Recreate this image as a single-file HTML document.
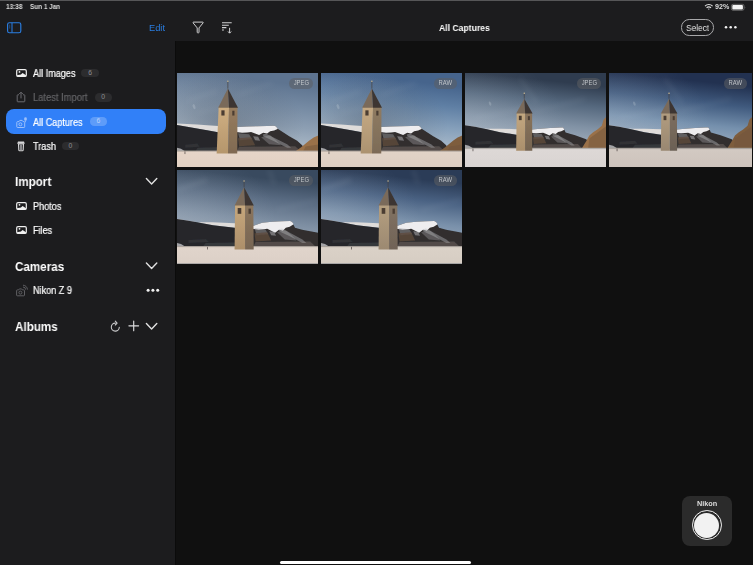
<!DOCTYPE html>
<html><head><meta charset="utf-8">
<style>
*{margin:0;padding:0;box-sizing:border-box}
html,body{width:753px;height:565px;overflow:hidden;background:#101010;font-family:"Liberation Sans",sans-serif;color:#fff}
.abs{position:absolute}
svg.abs{overflow:visible}
#side{position:absolute;left:0;top:0;width:175px;height:565px;background:#1c1c1e}
#tool{position:absolute;left:175px;top:0;width:578px;height:41.4px;background:#1c1c1e}
#sep{position:absolute;left:175px;top:41px;width:1px;height:524px;background:#0b0b0b}
#topline{position:absolute;left:0;top:0;width:753px;height:1px;background:#565658}
.t{position:absolute;white-space:nowrap;line-height:1;transform-origin:0 0;will-change:transform}
.badge{position:absolute;height:8.6px;border-radius:4.3px;background:#2c2c2e;color:#8e8e93;font-size:6.8px;text-align:center;line-height:8.8px}
.hdr{font-weight:bold;font-size:12.4px;transform:scaleX(.94)}
.item{font-size:10px;transform:scaleX(.91);-webkit-text-stroke:0.2px currentColor}
.thumb{position:absolute;overflow:hidden}
.thumb svg{display:block;width:100%;height:100%}
.tag{position:absolute;top:5px;right:5px;height:10.7px;border-radius:5.35px;background:rgba(92,94,98,.55);color:rgba(205,208,212,.9);font-size:6.4px;line-height:10.7px;text-align:center;will-change:transform}.tag span{display:inline-block;transform:scaleX(.92)}
</style></head><body>
<div id="side"></div>
<div id="tool"></div>
<div id="sep"></div>
<div id="topline"></div>

<!-- status bar -->
<div class="t" style="left:5.8px;top:3.3px;font-size:7px;color:#ddd;font-weight:bold;transform:scaleX(.92)">13:38</div><div class="t" style="left:29.8px;top:3.3px;font-size:7px;color:#ddd;font-weight:bold;transform:scaleX(.91)">Sun 1 Jan</div>
<svg class="abs" style="left:704px;top:3px" width="10" height="8" viewBox="0 0 10 8">
 <path d="M1,3.2 A5.2,5.2 0 0 1 8.6,3.2" fill="none" stroke="#ddd" stroke-width="1.1"/>
 <path d="M2.6,4.8 A3,3 0 0 1 7,4.8" fill="none" stroke="#ddd" stroke-width="1.1"/>
 <path d="M4.8,6.8 L3.9,5.9 A1.3,1.3 0 0 1 5.7,5.9 Z" fill="#ddd"/>
</svg>
<div class="t" style="left:714.8px;top:4.1px;font-size:7.1px;color:#ddd;font-weight:bold;transform:scaleX(1)">92%</div>
<svg class="abs" style="left:730px;top:3px" width="18" height="9" viewBox="0 0 18 9">
 <rect x="1.4" y="1.3" width="12.6" height="6" rx="1.6" fill="none" stroke="#777" stroke-width="0.8"/>
 <rect x="2.3" y="2.1" width="10.6" height="4.4" rx="0.8" fill="#f4f4f4"/>
 <path d="M14.8,3.4 Q16,4.3 14.8,5.2 Z" fill="#777"/>
</svg>

<!-- sidebar toggle -->
<svg class="abs" style="left:6px;top:21px" width="17" height="14" viewBox="0 0 17 14">
 <rect x="1.6" y="1.7" width="13.2" height="10" rx="1.8" fill="none" stroke="#2a7de0" stroke-width="1.15"/>
 <line x1="6" y1="1.7" x2="6" y2="11.7" stroke="#2a7de0" stroke-width="1.05"/>
 <line x1="3.7" y1="3.6" x2="3.7" y2="7.6" stroke="#2a7de0" stroke-width="0.8" opacity=".6"/>
</svg>
<div class="t" style="left:149.2px;top:24px;font-size:9.3px;color:#2a7de0">Edit</div>

<!-- sidebar items -->
<div class="abs" style="left:6px;top:109.2px;width:159.8px;height:24.8px;border-radius:8px;background:#3180f8"></div>

<svg class="abs" style="left:15px;top:68px" width="13" height="10" viewBox="0 0 13 10">
 <rect x="1.7" y="1.7" width="9.6" height="6.7" rx="1.3" fill="none" stroke="#f0f0f0" stroke-width="1.2"/>
 <circle cx="4.5" cy="3.9" r="0.9" fill="#f0f0f0"/>
 <path d="M1.8,8.4 L1.8,7.6 Q3.5,6.4 5,6.8 Q6,7 7.5,5 Q9,5.5 11.2,7.6 L11.2,8.4 Z" fill="#f0f0f0"/>
</svg>
<div class="t item" style="left:32.7px;top:68.7px">All Images</div>
<div class="badge" style="left:81.3px;top:68.7px;width:17.5px">6</div>

<svg class="abs" style="left:15px;top:90px" width="12" height="13" viewBox="0 0 12 13">
 <path d="M4,4.8 L2.8,4.8 Q2.2,4.8 2.2,5.4 L2.2,11.2 Q2.2,11.8 2.8,11.8 L9.2,11.8 Q9.8,11.8 9.8,11.2 L9.8,5.4 Q9.8,4.8 9.2,4.8 L8,4.8" fill="none" stroke="#6b6b70" stroke-width="1"/>
 <path d="M6,8.4 L6,2.4 M4.2,4 L6,2.2 L7.8,4" fill="none" stroke="#6b6b70" stroke-width="1"/>
</svg>
<div class="t item" style="left:32.7px;top:93.3px;color:#636366;transform:scaleX(.935)">Latest Import</div>
<div class="badge" style="left:94.5px;top:93.2px;width:17.5px">0</div>

<svg class="abs" style="left:15px;top:116px" width="13" height="13" viewBox="0 0 13 13">
 <path d="M1.8,6.4 Q1.8,5.6 2.6,5.6 L4,5.6 L4.8,4.4 L7.2,4.4 L8,5.6 L8.9,5.6 Q9.7,5.6 9.7,6.4 L9.7,10.8 Q9.7,11.5 8.9,11.5 L2.6,11.5 Q1.8,11.5 1.8,10.8 Z" fill="none" stroke="#9cc0fa" stroke-width="1"/>
 <circle cx="5.4" cy="8.3" r="1.5" fill="none" stroke="#9cc0fa" stroke-width="1"/>
 <rect x="9.2" y="1.2" width="2.6" height="3.6" rx="1.3" fill="#9cc0fa"/>
 <line x1="10.5" y1="4.6" x2="10.5" y2="6.2" stroke="#9cc0fa" stroke-width="0.8"/>
</svg>
<div class="t item" style="left:32.7px;top:117.5px">All Captures</div>
<div class="badge" style="left:89.6px;top:117.4px;width:17.5px;background:rgba(255,255,255,.22);color:rgba(255,255,255,.55)">6</div>

<svg class="abs" style="left:15px;top:140px" width="12" height="12" viewBox="0 0 12 12">
 <path d="M3,1.6 L9,1.6 L9.8,3.8 L2.2,3.8 Z" fill="#d6d6d8"/>
 <path d="M3.5,4 L8.5,4 L8.2,10 Q8.1,10.7 7.4,10.7 L4.6,10.7 Q3.9,10.7 3.8,10 Z" fill="none" stroke="#d6d6d8" stroke-width="1.1"/>
 <rect x="4.8" y="4.6" width="2.4" height="5.4" fill="#8a8a8e"/>
</svg>
<div class="t item" style="left:32.7px;top:142.1px">Trash</div>
<div class="badge" style="left:61.7px;top:141.8px;width:17.5px">0</div>

<div class="t hdr" style="left:14.8px;top:176.3px">Import</div>
<svg class="abs" style="left:144px;top:176px" width="16" height="11" viewBox="0 0 16 11">
 <path d="M2.4,2.6 L7.6,8 L12.8,2.6" fill="none" stroke="#e0e0e0" stroke-width="1.4" stroke-linecap="round" stroke-linejoin="round"/>
</svg>

<svg class="abs" style="left:15px;top:201px" width="13" height="10" viewBox="0 0 13 10">
 <rect x="1.7" y="1.6" width="9.6" height="6.8" rx="1.3" fill="none" stroke="#f0f0f0" stroke-width="1.2"/>
 <circle cx="4.5" cy="3.8" r="0.9" fill="#f0f0f0"/>
 <path d="M1.8,8.4 L1.8,7.6 Q3.5,6.4 5,6.8 Q6,7 7.5,5 Q9,5.5 11.2,7.6 L11.2,8.4 Z" fill="#f0f0f0"/>
</svg>
<div class="t item" style="left:32.7px;top:202.1px">Photos</div>
<svg class="abs" style="left:15px;top:225px" width="13" height="10" viewBox="0 0 13 10">
 <rect x="1.7" y="1.6" width="9.6" height="6.8" rx="1.3" fill="none" stroke="#f0f0f0" stroke-width="1.2"/>
 <circle cx="4.5" cy="3.8" r="0.9" fill="#f0f0f0"/>
 <path d="M1.8,8.4 L1.8,7.6 Q3.5,6.4 5,6.8 Q6,7 7.5,5 Q9,5.5 11.2,7.6 L11.2,8.4 Z" fill="#f0f0f0"/>
</svg>
<div class="t item" style="left:32.7px;top:226.3px">Files</div>

<div class="t hdr" style="left:14.8px;top:260.7px">Cameras</div>
<svg class="abs" style="left:144px;top:260px" width="16" height="11" viewBox="0 0 16 11">
 <path d="M2.4,3 L7.6,8.4 L12.8,3" fill="none" stroke="#e0e0e0" stroke-width="1.4" stroke-linecap="round" stroke-linejoin="round"/>
</svg>
<svg class="abs" style="left:15px;top:283px" width="14" height="14" viewBox="0 0 14 14">
 <path d="M1.6,7.6 Q1.6,6.9 2.3,6.9 L3.6,6.9 L4.4,5.9 L6.6,5.9 L7.4,6.9 L8.8,6.9 Q9.5,6.9 9.5,7.6 L9.5,12.1 Q9.5,12.8 8.8,12.8 L2.3,12.8 Q1.6,12.8 1.6,12.1 Z" fill="none" stroke="#5e5e62" stroke-width="1"/>
 <circle cx="5.4" cy="9.6" r="1.5" fill="none" stroke="#5e5e62" stroke-width="1"/>
 <path d="M8,2.2 A4.4,4.4 0 0 1 12.4,6.6" fill="none" stroke="#5e5e62" stroke-width="1"/>
 <path d="M8,4 A2.6,2.6 0 0 1 10.6,6.6" fill="none" stroke="#5e5e62" stroke-width="1"/>
</svg>
<div class="t item" style="left:32.7px;top:286.3px">Nikon Z 9</div>
<svg class="abs" style="left:145px;top:287px" width="16" height="7" viewBox="0 0 16 7">
 <circle cx="3.1" cy="3.3" r="1.5" fill="#f2f2f2"/>
 <circle cx="7.9" cy="3.3" r="1.5" fill="#f2f2f2"/>
 <circle cx="12.7" cy="3.3" r="1.5" fill="#f2f2f2"/>
</svg>

<div class="t hdr" style="left:14.8px;top:320.7px">Albums</div>
<svg class="abs" style="left:109px;top:319px" width="14" height="14" viewBox="0 0 14 14">
 <path d="M10.3,8.3 A4,4 0 1 1 6.4,4.1" fill="none" stroke="#c8c8ca" stroke-width="1.1" stroke-linecap="round"/>
 <path d="M6.3,2.2 L8.1,4.1 L6.3,6" fill="none" stroke="#c8c8ca" stroke-width="1.1" stroke-linecap="round" stroke-linejoin="round"/>
</svg>
<svg class="abs" style="left:127px;top:319px" width="14" height="14" viewBox="0 0 14 14">
 <path d="M6.7,2 L6.7,11.7 M1.9,6.8 L11.6,6.8" fill="none" stroke="#dcdcde" stroke-width="1.15" stroke-linecap="round"/>
</svg>
<svg class="abs" style="left:144px;top:321px" width="16" height="11" viewBox="0 0 16 11">
 <path d="M2.4,2.6 L7.6,8 L12.8,2.6" fill="none" stroke="#e0e0e0" stroke-width="1.4" stroke-linecap="round" stroke-linejoin="round"/>
</svg>

<!-- toolbar -->
<svg class="abs" style="left:190px;top:19px" width="16" height="16" viewBox="0 0 16 16">
 <path d="M3.6,3.1 L12.6,3.1 Q13.6,3.1 13,4 L9,8.9 L9,13.2 Q9,13.9 8.3,13.9 L7.9,13.9 Q7.2,13.9 7.2,13.2 L7.2,8.9 L3.2,4 Q2.6,3.1 3.6,3.1 Z" fill="none" stroke="#cfcfd1" stroke-width="1" stroke-linejoin="round"/>
</svg>
<svg class="abs" style="left:220px;top:20px" width="15" height="16" viewBox="0 0 15 16">
 <path d="M2,2.7 L11.7,2.7 M2,5.3 L8.8,5.3 M2,7.6 L6.4,7.6 M2,10 L3.9,10" fill="none" stroke="#d0d0d2" stroke-width="1.1"/>
 <path d="M9.6,7.8 L9.6,13 M8,11.5 L9.6,13.2 L11.2,11.5" fill="none" stroke="#d0d0d2" stroke-width="1" stroke-linejoin="round"/>
</svg>
<div class="t" style="left:439px;top:22.6px;font-size:9.4px;font-weight:bold;transform:scaleX(.92)">All Captures</div>
<div class="abs" style="left:681px;top:19.3px;width:33.2px;height:16.5px;border:1px solid #a8a8aa;border-radius:8.25px"></div>
<div class="t" style="left:686px;top:23.6px;font-size:9.2px;color:#e8e8e8;transform:scaleX(.9)">Select</div>
<svg class="abs" style="left:723px;top:24px" width="16" height="7" viewBox="0 0 16 7">
 <circle cx="3" cy="3.3" r="1.25" fill="#f2f2f2"/>
 <circle cx="7.7" cy="3.3" r="1.25" fill="#f2f2f2"/>
 <circle cx="12.4" cy="3.3" r="1.25" fill="#f2f2f2"/>
</svg>

<!-- thumbs -->
<div class="thumb" style="left:177px;top:73px;width:141.2px;height:94.3px"><svg viewBox="0 0 141 94" preserveAspectRatio="none"><defs><filter id="b0" x="-5%" y="-5%" width="110%" height="110%"><feGaussianBlur stdDeviation="0.55"/></filter><filter id="bb0" x="-20%" y="-20%" width="140%" height="140%"><feGaussianBlur stdDeviation="2.6"/></filter><filter id="bt0" x="-20%" y="-20%" width="140%" height="140%"><feGaussianBlur stdDeviation="0.6"/></filter><linearGradient id="s0" x1="0.1" y1="0" x2="0" y2="0.62"><stop offset="0" stop-color="#5e7490"/><stop offset="0.35" stop-color="#7489a2"/><stop offset="0.72" stop-color="#8d9fb3"/><stop offset="1" stop-color="#a5b4c3"/></linearGradient><radialGradient id="sh0" cx="0" cy="0.5" r="0.7"><stop offset="0" stop-color="#c0cad4" stop-opacity="0.22"/><stop offset="1" stop-color="#c0cad4" stop-opacity="0"/></radialGradient><linearGradient id="l0" x1="0" y1="0" x2="0" y2="1"><stop offset="0" stop-color="#c2b5ab"/><stop offset="0.1" stop-color="#e6d5c8"/><stop offset="1" stop-color="#e3d1c3"/></linearGradient><linearGradient id="tl0" x1="0" y1="0" x2="0" y2="1"><stop offset="0" stop-color="#d0af82"/><stop offset="1" stop-color="#b5966c"/></linearGradient><linearGradient id="tr0" x1="0" y1="0" x2="0" y2="1"><stop offset="0" stop-color="#977c5e"/><stop offset="1" stop-color="#806a52"/></linearGradient><radialGradient id="dk0" cx="0.35" cy="0.55" r="0.55"><stop offset="0" stop-color="#556170" stop-opacity="0.5"/><stop offset="1" stop-color="#5a6470" stop-opacity="0"/></radialGradient></defs><rect width="141" height="94" fill="url(#s0)"/><rect width="141" height="94" fill="url(#sh0)"/><rect width="141" height="94" fill="url(#dk0)"/><g filter="url(#bb0)" opacity="0.12"><line x1="10.0" y1="28.0" x2="40.0" y2="18.0" stroke="#c4ced8" stroke-width="2.5"/><line x1="60.0" y1="22.0" x2="95.0" y2="10.0" stroke="#c4ced8" stroke-width="2.0"/><line x1="20.0" y1="40.0" x2="50.0" y2="33.0" stroke="#c4ced8" stroke-width="1.6"/></g><g filter="url(#b0)"><ellipse cx="17.0" cy="33.5" rx="1.3" ry="2.6" transform="rotate(-20 17.0 33.5)" fill="#cfd8e0" opacity="0.25"/><polygon points="0.00,50.40 10.00,50.80 20.00,51.30 30.00,52.00 41.00,52.80 42.60,52.80 42.60,59.00 41.00,59.00 30.00,57.00 20.00,55.30 10.00,53.50 0.00,51.90" fill="#dfdcda"/><polygon points="0.00,51.90 10.00,53.50 20.00,55.30 30.00,57.00 41.00,59.00 42.60,59.00 42.60,77.90 0.00,77.90" fill="#26272b"/><polygon points="20.50,74.40 41.00,73.90 41.00,77.90 18.45,77.90" fill="#707076" opacity="0.22"/><polygon points="8.20,71.40 20.50,70.40 22.55,73.40 8.20,74.40" fill="#5c5d62" opacity="0.18"/><polygon points="0.00,74.40 4.00,75.40 8.00,77.90 0.00,77.90" fill="#d8d8dc" opacity="0.7"/><polygon points="59.40,53.80 60.00,53.80 70.00,53.30 80.00,53.00 90.00,52.80 97.00,52.60 99.00,53.30 100.50,55.50 104.00,57.80 112.50,63.20 120.00,67.50 125.00,72.00 128.00,77.40 128.00,77.90 59.40,77.90" fill="#312e2e"/><polygon points="59.40,53.80 60.00,53.80 70.00,53.30 80.00,53.00 90.00,52.80 97.00,52.60 99.00,53.30 100.50,55.50 101.00,55.60 97.00,57.40 93.00,58.12 90.00,60.28 86.00,59.56 82.00,61.72 78.00,60.28 74.00,58.84 70.00,59.20 65.00,59.56 59.00,58.84" fill="#eeedef"/><g filter="url(#bt0)"><polygon points="86.00,61.00 89.00,60.50 100.00,66.00 110.00,71.00 114.00,74.50 110.00,74.50 97.00,68.00 86.00,63.00" fill="#b8b8bc" opacity="0.42"/><polygon points="76.00,63.00 81.00,63.50 83.00,67.50 78.00,67.00" fill="#b8b8bc" opacity="0.5"/><polygon points="61.00,60.00 72.00,61.00 75.00,66.00 63.00,67.00" fill="#9a9a9f" opacity="0.45"/><polygon points="84.00,64.00 93.00,62.00 99.00,67.00 104.00,72.00 92.00,71.00" fill="#a8a8ad" opacity="0.35"/><polygon points="61.00,65.00 74.00,64.00 78.00,72.00 62.00,73.00" fill="#5e4b3c" opacity="0.8"/><polygon points="62.00,73.50 118.00,73.00 123.00,77.60 60.00,77.60" fill="#8f857e" opacity="0.35"/></g><polygon points="119.00,77.40 124.00,74.00 128.50,70.30 132.50,67.00 136.50,64.30 141.00,62.30 141.00,77.90 119.00,77.90" fill="#9a7148"/><polygon points="128.50,73.30 141.00,71.30 141.00,77.90 126.00,77.90" fill="#6f553d" opacity="0.5"/><rect x="0" y="77.40" width="141" height="16.60" fill="url(#l0)"/><rect x="0" y="77.40" width="141" height="0.9" fill="#7d7774" opacity="0.35"/><rect x="7.5" y="78.20" width="0.9" height="2.6" fill="#3a3230" opacity="0.7"/><polygon points="41.60,34.00 51.94,34.00 50.93,80.30 39.60,80.30" fill="url(#tl0)"/><polygon points="51.94,34.00 60.40,34.00 60.20,80.30 50.93,80.30" fill="url(#tr0)"/><polygon points="50.80,15.50 51.94,34.70 41.10,34.70" fill="#7a6a5a"/><polygon points="50.80,15.50 60.90,34.70 51.94,34.70" fill="#3e3631"/><line x1="50.8" y1="8.3" x2="50.8" y2="15.5" stroke="#46423e" stroke-width="0.7"/><circle cx="50.8" cy="8.3" r="0.75" fill="#c9b993"/><rect x="44.3" y="37.2" width="3.2" height="5.2" fill="#4b3e33"/><rect x="55.2" y="37.6" width="2.2" height="4.8" fill="#4b3e33"/></g></svg><div class="tag" style="width:23.8px"><span>JPEG</span></div></div>
<div class="thumb" style="left:321px;top:73px;width:141.2px;height:94.3px"><svg viewBox="0 0 141 94" preserveAspectRatio="none"><defs><filter id="b1" x="-5%" y="-5%" width="110%" height="110%"><feGaussianBlur stdDeviation="0.55"/></filter><filter id="bb1" x="-20%" y="-20%" width="140%" height="140%"><feGaussianBlur stdDeviation="2.6"/></filter><filter id="bt1" x="-20%" y="-20%" width="140%" height="140%"><feGaussianBlur stdDeviation="0.6"/></filter><linearGradient id="s1" x1="0.1" y1="0" x2="0" y2="0.62"><stop offset="0" stop-color="#46648c"/><stop offset="0.35" stop-color="#5f7fa4"/><stop offset="0.72" stop-color="#86a0bb"/><stop offset="1" stop-color="#a3b5c7"/></linearGradient><radialGradient id="sh1" cx="0" cy="0.5" r="0.7"><stop offset="0" stop-color="#c0cad4" stop-opacity="0.22"/><stop offset="1" stop-color="#c0cad4" stop-opacity="0"/></radialGradient><linearGradient id="l1" x1="0" y1="0" x2="0" y2="1"><stop offset="0" stop-color="#bfb3aa"/><stop offset="0.1" stop-color="#e1d3c7"/><stop offset="1" stop-color="#ddcec2"/></linearGradient><linearGradient id="tl1" x1="0" y1="0" x2="0" y2="1"><stop offset="0" stop-color="#c6aa84"/><stop offset="1" stop-color="#ab9270"/></linearGradient><linearGradient id="tr1" x1="0" y1="0" x2="0" y2="1"><stop offset="0" stop-color="#8f7b62"/><stop offset="1" stop-color="#7c6b57"/></linearGradient><radialGradient id="dk1" cx="0.35" cy="0.55" r="0.55"><stop offset="0" stop-color="#556170" stop-opacity="0.5"/><stop offset="1" stop-color="#5a6470" stop-opacity="0"/></radialGradient></defs><rect width="141" height="94" fill="url(#s1)"/><rect width="141" height="94" fill="url(#sh1)"/><rect width="141" height="94" fill="url(#dk1)"/><g filter="url(#bb1)" opacity="0.12"><line x1="10.0" y1="28.0" x2="40.0" y2="18.0" stroke="#c4ced8" stroke-width="2.5"/><line x1="60.0" y1="22.0" x2="95.0" y2="10.0" stroke="#c4ced8" stroke-width="2.0"/><line x1="20.0" y1="40.0" x2="50.0" y2="33.0" stroke="#c4ced8" stroke-width="1.6"/></g><g filter="url(#b1)"><ellipse cx="17.0" cy="33.5" rx="1.3" ry="2.6" transform="rotate(-20 17.0 33.5)" fill="#cfd8e0" opacity="0.25"/><polygon points="0.00,50.40 10.00,50.80 20.00,51.30 30.00,52.00 41.00,52.80 42.60,52.80 42.60,59.00 41.00,59.00 30.00,57.00 20.00,55.30 10.00,53.50 0.00,51.90" fill="#dfdcda"/><polygon points="0.00,51.90 10.00,53.50 20.00,55.30 30.00,57.00 41.00,59.00 42.60,59.00 42.60,77.90 0.00,77.90" fill="#26272b"/><polygon points="20.50,74.40 41.00,73.90 41.00,77.90 18.45,77.90" fill="#707076" opacity="0.22"/><polygon points="8.20,71.40 20.50,70.40 22.55,73.40 8.20,74.40" fill="#5c5d62" opacity="0.18"/><polygon points="0.00,74.40 4.00,75.40 8.00,77.90 0.00,77.90" fill="#d8d8dc" opacity="0.7"/><polygon points="59.40,53.80 60.00,53.80 70.00,53.30 80.00,53.00 90.00,52.80 97.00,52.60 99.00,53.30 100.50,55.50 104.00,57.80 112.50,63.20 120.00,67.50 125.00,72.00 128.00,77.40 128.00,77.90 59.40,77.90" fill="#312e2e"/><polygon points="59.40,53.80 60.00,53.80 70.00,53.30 80.00,53.00 90.00,52.80 97.00,52.60 99.00,53.30 100.50,55.50 101.00,55.60 97.00,57.40 93.00,58.12 90.00,60.28 86.00,59.56 82.00,61.72 78.00,60.28 74.00,58.84 70.00,59.20 65.00,59.56 59.00,58.84" fill="#eeedef"/><g filter="url(#bt1)"><polygon points="86.00,61.00 89.00,60.50 100.00,66.00 110.00,71.00 114.00,74.50 110.00,74.50 97.00,68.00 86.00,63.00" fill="#b8b8bc" opacity="0.42"/><polygon points="76.00,63.00 81.00,63.50 83.00,67.50 78.00,67.00" fill="#b8b8bc" opacity="0.5"/><polygon points="61.00,60.00 72.00,61.00 75.00,66.00 63.00,67.00" fill="#9a9a9f" opacity="0.45"/><polygon points="84.00,64.00 93.00,62.00 99.00,67.00 104.00,72.00 92.00,71.00" fill="#a8a8ad" opacity="0.35"/><polygon points="61.00,65.00 74.00,64.00 78.00,72.00 62.00,73.00" fill="#5e4b3c" opacity="0.8"/><polygon points="62.00,73.50 118.00,73.00 123.00,77.60 60.00,77.60" fill="#8f857e" opacity="0.35"/></g><polygon points="119.00,77.40 124.00,74.00 128.50,70.30 132.50,67.00 136.50,64.30 141.00,62.30 141.00,77.90 119.00,77.90" fill="#7e5d3e"/><polygon points="128.50,73.30 141.00,71.30 141.00,77.90 126.00,77.90" fill="#6f553d" opacity="0.5"/><rect x="0" y="77.40" width="141" height="16.60" fill="url(#l1)"/><rect x="0" y="77.40" width="141" height="0.9" fill="#7d7774" opacity="0.35"/><rect x="7.5" y="78.20" width="0.9" height="2.6" fill="#3a3230" opacity="0.7"/><polygon points="41.60,34.00 51.94,34.00 50.93,80.30 39.60,80.30" fill="url(#tl1)"/><polygon points="51.94,34.00 60.40,34.00 60.20,80.30 50.93,80.30" fill="url(#tr1)"/><polygon points="50.80,15.50 51.94,34.70 41.10,34.70" fill="#7a6a5a"/><polygon points="50.80,15.50 60.90,34.70 51.94,34.70" fill="#3e3631"/><line x1="50.8" y1="8.3" x2="50.8" y2="15.5" stroke="#46423e" stroke-width="0.7"/><circle cx="50.8" cy="8.3" r="0.75" fill="#c9b993"/><rect x="44.3" y="37.2" width="3.2" height="5.2" fill="#4b3e33"/><rect x="55.2" y="37.6" width="2.2" height="4.8" fill="#4b3e33"/></g></svg><div class="tag" style="width:22.8px"><span>RAW</span></div></div>
<div class="thumb" style="left:465px;top:73px;width:141.2px;height:94.3px"><svg viewBox="0 0 141 94" preserveAspectRatio="none"><defs><filter id="b2" x="-5%" y="-5%" width="110%" height="110%"><feGaussianBlur stdDeviation="0.55"/></filter><filter id="bb2" x="-20%" y="-20%" width="140%" height="140%"><feGaussianBlur stdDeviation="2.6"/></filter><filter id="bt2" x="-20%" y="-20%" width="140%" height="140%"><feGaussianBlur stdDeviation="0.6"/></filter><linearGradient id="s2" x1="0.1" y1="0" x2="0" y2="0.62"><stop offset="0" stop-color="#2f3c4f"/><stop offset="0.35" stop-color="#55687e"/><stop offset="0.72" stop-color="#8192a5"/><stop offset="1" stop-color="#9dabba"/></linearGradient><radialGradient id="sh2" cx="0" cy="0.5" r="0.7"><stop offset="0" stop-color="#c0cad4" stop-opacity="0.22"/><stop offset="1" stop-color="#c0cad4" stop-opacity="0"/></radialGradient><linearGradient id="l2" x1="0" y1="0" x2="0" y2="1"><stop offset="0" stop-color="#bab5b3"/><stop offset="0.1" stop-color="#ddd8d6"/><stop offset="1" stop-color="#d9d4d2"/></linearGradient><linearGradient id="tl2" x1="0" y1="0" x2="0" y2="1"><stop offset="0" stop-color="#c4a880"/><stop offset="1" stop-color="#aa8f6c"/></linearGradient><linearGradient id="tr2" x1="0" y1="0" x2="0" y2="1"><stop offset="0" stop-color="#8a745b"/><stop offset="1" stop-color="#756451"/></linearGradient><radialGradient id="dk2" cx="0.35" cy="0.55" r="0.55"><stop offset="0" stop-color="#556170" stop-opacity="0.5"/><stop offset="1" stop-color="#5a6470" stop-opacity="0"/></radialGradient></defs><rect width="141" height="94" fill="url(#s2)"/><rect width="141" height="94" fill="url(#sh2)"/><g filter="url(#bb2)" opacity="0.12"><line x1="10.0" y1="45.0" x2="60.0" y2="35.0" stroke="#c4ced8" stroke-width="2.5"/><line x1="55.0" y1="5.0" x2="72.0" y2="30.0" stroke="#c4ced8" stroke-width="2.2"/><line x1="70.0" y1="38.0" x2="120.0" y2="26.0" stroke="#c4ced8" stroke-width="2.0"/></g><g filter="url(#b2)"><ellipse cx="25.0" cy="30.5" rx="1.1" ry="2.2" transform="rotate(-20 25.0 30.5)" fill="#cfd8e0" opacity="0.25"/><polygon points="0.00,53.00 12.00,54.50 22.60,55.50 35.00,55.50 51.30,56.00 52.60,56.00 52.60,61.50 51.30,61.50 35.00,59.00 22.00,56.00 10.00,53.50 0.00,52.00" fill="#dfdcda"/><polygon points="0.00,52.00 10.00,53.50 22.00,56.00 35.00,59.00 51.30,61.50 52.60,61.50 52.60,75.10 0.00,75.10" fill="#26272b"/><polygon points="25.65,71.60 51.30,71.10 51.30,75.10 23.09,75.10" fill="#707076" opacity="0.22"/><polygon points="10.26,68.60 25.65,67.60 28.21,70.60 10.26,71.60" fill="#5c5d62" opacity="0.18"/><polygon points="0.00,71.60 4.00,72.60 8.00,75.10 0.00,75.10" fill="#d8d8dc" opacity="0.7"/><polygon points="66.00,56.20 67.00,56.20 75.00,55.50 85.00,54.80 95.00,54.30 98.00,54.30 99.00,56.00 100.50,59.40 110.00,62.00 121.00,66.00 125.00,70.00 128.00,74.60 128.00,75.10 66.00,75.10" fill="#312e2e"/><polygon points="66.00,56.20 67.00,56.20 75.00,55.50 85.00,54.80 95.00,54.30 98.00,54.30 99.00,56.00 99.29,56.46 96.14,58.14 92.99,58.81 90.62,60.84 87.47,60.16 84.33,62.18 81.17,60.84 78.03,59.49 74.88,59.83 70.94,60.16 66.21,59.49" fill="#eeedef"/><g filter="url(#bt2)"><polygon points="87.47,60.79 89.84,60.36 98.50,65.00 106.38,69.21 109.53,72.16 106.38,72.16 96.14,66.68 87.47,62.47" fill="#b8b8bc" opacity="0.42"/><polygon points="79.60,62.47 83.54,62.89 85.11,66.26 81.17,65.84" fill="#b8b8bc" opacity="0.5"/><polygon points="67.79,59.94 76.45,60.79 78.81,65.00 69.36,65.84" fill="#9a9a9f" opacity="0.45"/><polygon points="85.90,63.31 92.99,61.63 97.71,65.84 101.65,70.05 92.20,69.21" fill="#a8a8ad" opacity="0.35"/><polygon points="67.79,64.16 78.03,63.31 81.17,70.05 68.58,70.89" fill="#5e4b3c" opacity="0.8"/><polygon points="68.58,71.31 112.67,70.89 116.61,74.77 67.00,74.77" fill="#8f857e" opacity="0.35"/></g><polygon points="117.00,74.60 121.00,68.00 124.20,62.40 128.00,59.00 132.20,56.20 136.60,52.70 138.40,46.50 140.10,44.70 141.00,44.00 141.00,75.10 117.00,75.10" fill="#9a7148"/><polygon points="124.20,65.40 141.00,53.00 141.00,75.10 123.00,75.10" fill="#6f553d" opacity="0.5"/><rect x="0" y="74.60" width="141" height="19.40" fill="url(#l2)"/><rect x="0" y="74.60" width="141" height="0.9" fill="#7d7774" opacity="0.35"/><rect x="7.5" y="75.40" width="0.9" height="2.6" fill="#3a3230" opacity="0.7"/><polygon points="51.60,39.60 60.07,39.60 59.96,77.40 51.10,77.40" fill="url(#tl2)"/><polygon points="60.07,39.60 67.00,39.60 67.20,77.40 59.96,77.40" fill="url(#tr2)"/><polygon points="59.20,25.60 60.07,40.30 51.10,40.30" fill="#7a6a5a"/><polygon points="59.20,25.60 67.50,40.30 60.07,40.30" fill="#3e3631"/><line x1="59.2" y1="20.3" x2="59.2" y2="25.6" stroke="#46423e" stroke-width="0.7"/><circle cx="59.2" cy="20.3" r="0.75" fill="#c9b993"/><rect x="53.8" y="42.6" width="2.8" height="4.4" fill="#4b3e33"/><rect x="62.8" y="43.0" width="2.0" height="4.0" fill="#4b3e33"/></g></svg><div class="tag" style="width:23.8px"><span>JPEG</span></div></div>
<div class="thumb" style="left:609px;top:73px;width:143px;height:94.3px"><svg viewBox="0 0 141 94" preserveAspectRatio="none"><defs><filter id="b3" x="-5%" y="-5%" width="110%" height="110%"><feGaussianBlur stdDeviation="0.55"/></filter><filter id="bb3" x="-20%" y="-20%" width="140%" height="140%"><feGaussianBlur stdDeviation="2.6"/></filter><filter id="bt3" x="-20%" y="-20%" width="140%" height="140%"><feGaussianBlur stdDeviation="0.6"/></filter><linearGradient id="s3" x1="0.1" y1="0" x2="0" y2="0.62"><stop offset="0" stop-color="#223150"/><stop offset="0.35" stop-color="#405a7e"/><stop offset="0.72" stop-color="#7590ad"/><stop offset="1" stop-color="#95a8bd"/></linearGradient><radialGradient id="sh3" cx="0" cy="0.5" r="0.7"><stop offset="0" stop-color="#c0cad4" stop-opacity="0.22"/><stop offset="1" stop-color="#c0cad4" stop-opacity="0"/></radialGradient><linearGradient id="l3" x1="0" y1="0" x2="0" y2="1"><stop offset="0" stop-color="#aea7a3"/><stop offset="0.1" stop-color="#d2c9c2"/><stop offset="1" stop-color="#cdc3bc"/></linearGradient><linearGradient id="tl3" x1="0" y1="0" x2="0" y2="1"><stop offset="0" stop-color="#b29d7f"/><stop offset="1" stop-color="#998771"/></linearGradient><linearGradient id="tr3" x1="0" y1="0" x2="0" y2="1"><stop offset="0" stop-color="#7e6f5f"/><stop offset="1" stop-color="#6b6055"/></linearGradient><radialGradient id="dk3" cx="0.35" cy="0.55" r="0.55"><stop offset="0" stop-color="#556170" stop-opacity="0.5"/><stop offset="1" stop-color="#5a6470" stop-opacity="0"/></radialGradient></defs><rect width="141" height="94" fill="url(#s3)"/><rect width="141" height="94" fill="url(#sh3)"/><g filter="url(#bb3)" opacity="0.12"><line x1="10.0" y1="45.0" x2="60.0" y2="35.0" stroke="#c4ced8" stroke-width="2.5"/><line x1="55.0" y1="5.0" x2="72.0" y2="30.0" stroke="#c4ced8" stroke-width="2.2"/><line x1="70.0" y1="38.0" x2="120.0" y2="26.0" stroke="#c4ced8" stroke-width="2.0"/></g><g filter="url(#b3)"><ellipse cx="25.0" cy="30.5" rx="1.1" ry="2.2" transform="rotate(-20 25.0 30.5)" fill="#cfd8e0" opacity="0.25"/><polygon points="0.00,53.00 12.00,54.50 22.60,55.50 35.00,55.50 51.30,56.00 52.60,56.00 52.60,61.50 51.30,61.50 35.00,59.00 22.00,56.00 10.00,53.50 0.00,52.00" fill="#dfdcda"/><polygon points="0.00,52.00 10.00,53.50 22.00,56.00 35.00,59.00 51.30,61.50 52.60,61.50 52.60,75.10 0.00,75.10" fill="#26272b"/><polygon points="25.65,71.60 51.30,71.10 51.30,75.10 23.09,75.10" fill="#707076" opacity="0.22"/><polygon points="10.26,68.60 25.65,67.60 28.21,70.60 10.26,71.60" fill="#5c5d62" opacity="0.18"/><polygon points="0.00,71.60 4.00,72.60 8.00,75.10 0.00,75.10" fill="#d8d8dc" opacity="0.7"/><polygon points="66.00,56.20 67.00,56.20 75.00,55.50 85.00,54.80 95.00,54.30 98.00,54.30 99.00,56.00 100.50,59.40 110.00,62.00 121.00,66.00 125.00,70.00 128.00,74.60 128.00,75.10 66.00,75.10" fill="#312e2e"/><polygon points="66.00,56.20 67.00,56.20 75.00,55.50 85.00,54.80 95.00,54.30 98.00,54.30 99.00,56.00 99.29,56.46 96.14,58.14 92.99,58.81 90.62,60.84 87.47,60.16 84.33,62.18 81.17,60.84 78.03,59.49 74.88,59.83 70.94,60.16 66.21,59.49" fill="#eeedef"/><g filter="url(#bt3)"><polygon points="87.47,60.79 89.84,60.36 98.50,65.00 106.38,69.21 109.53,72.16 106.38,72.16 96.14,66.68 87.47,62.47" fill="#b8b8bc" opacity="0.42"/><polygon points="79.60,62.47 83.54,62.89 85.11,66.26 81.17,65.84" fill="#b8b8bc" opacity="0.5"/><polygon points="67.79,59.94 76.45,60.79 78.81,65.00 69.36,65.84" fill="#9a9a9f" opacity="0.45"/><polygon points="85.90,63.31 92.99,61.63 97.71,65.84 101.65,70.05 92.20,69.21" fill="#a8a8ad" opacity="0.35"/><polygon points="67.79,64.16 78.03,63.31 81.17,70.05 68.58,70.89" fill="#5e4b3c" opacity="0.8"/><polygon points="68.58,71.31 112.67,70.89 116.61,74.77 67.00,74.77" fill="#8f857e" opacity="0.35"/></g><polygon points="117.00,74.60 121.00,68.00 124.20,62.40 128.00,59.00 132.20,56.20 136.60,52.70 138.40,46.50 140.10,44.70 141.00,44.00 141.00,75.10 117.00,75.10" fill="#7e5d3e"/><polygon points="124.20,65.40 141.00,53.00 141.00,75.10 123.00,75.10" fill="#6f553d" opacity="0.5"/><rect x="0" y="74.60" width="141" height="19.40" fill="url(#l3)"/><rect x="0" y="74.60" width="141" height="0.9" fill="#7d7774" opacity="0.35"/><rect x="7.5" y="75.40" width="0.9" height="2.6" fill="#3a3230" opacity="0.7"/><polygon points="51.60,39.60 60.07,39.60 59.96,77.40 51.10,77.40" fill="url(#tl3)"/><polygon points="60.07,39.60 67.00,39.60 67.20,77.40 59.96,77.40" fill="url(#tr3)"/><polygon points="59.20,25.60 60.07,40.30 51.10,40.30" fill="#7a6a5a"/><polygon points="59.20,25.60 67.50,40.30 60.07,40.30" fill="#3e3631"/><line x1="59.2" y1="20.3" x2="59.2" y2="25.6" stroke="#46423e" stroke-width="0.7"/><circle cx="59.2" cy="20.3" r="0.75" fill="#c9b993"/><rect x="53.8" y="42.6" width="2.8" height="4.4" fill="#4b3e33"/><rect x="62.8" y="43.0" width="2.0" height="4.0" fill="#4b3e33"/></g></svg><div class="tag" style="width:22.8px"><span>RAW</span></div></div>
<div class="thumb" style="left:177px;top:170px;width:141.2px;height:93.6px"><svg viewBox="0 0 141 94" preserveAspectRatio="none"><defs><filter id="b4" x="-5%" y="-5%" width="110%" height="110%"><feGaussianBlur stdDeviation="0.55"/></filter><filter id="bb4" x="-20%" y="-20%" width="140%" height="140%"><feGaussianBlur stdDeviation="2.6"/></filter><filter id="bt4" x="-20%" y="-20%" width="140%" height="140%"><feGaussianBlur stdDeviation="0.6"/></filter><linearGradient id="s4" x1="0.1" y1="0" x2="0" y2="0.62"><stop offset="0" stop-color="#394a5f"/><stop offset="0.35" stop-color="#5a6c83"/><stop offset="0.72" stop-color="#7d8ea2"/><stop offset="1" stop-color="#95a3b3"/></linearGradient><radialGradient id="sh4" cx="0" cy="0.5" r="0.7"><stop offset="0" stop-color="#c0cad4" stop-opacity="0.22"/><stop offset="1" stop-color="#c0cad4" stop-opacity="0"/></radialGradient><linearGradient id="l4" x1="0" y1="0" x2="0" y2="1"><stop offset="0" stop-color="#bcb2ab"/><stop offset="0.1" stop-color="#e0d4cb"/><stop offset="1" stop-color="#dcd0c7"/></linearGradient><linearGradient id="tl4" x1="0" y1="0" x2="0" y2="1"><stop offset="0" stop-color="#c7a87d"/><stop offset="1" stop-color="#ad8f6a"/></linearGradient><linearGradient id="tr4" x1="0" y1="0" x2="0" y2="1"><stop offset="0" stop-color="#8c765d"/><stop offset="1" stop-color="#776553"/></linearGradient><radialGradient id="dk4" cx="0.35" cy="0.55" r="0.55"><stop offset="0" stop-color="#556170" stop-opacity="0.5"/><stop offset="1" stop-color="#5a6470" stop-opacity="0"/></radialGradient></defs><rect width="141" height="94" fill="url(#s4)"/><rect width="141" height="94" fill="url(#sh4)"/><g filter="url(#bb4)" opacity="0.12"><line x1="0.0" y1="20.0" x2="30.0" y2="10.0" stroke="#c4ced8" stroke-width="4.0"/><line x1="92.0" y1="0.0" x2="97.0" y2="14.0" stroke="#c4ced8" stroke-width="2.5"/><line x1="100.0" y1="40.0" x2="140.0" y2="30.0" stroke="#c4ced8" stroke-width="2.0"/></g><g filter="url(#b4)"><polygon points="0.00,50.30 10.00,51.60 22.00,52.40 35.00,52.50 57.50,53.50 59.00,53.50 59.00,58.00 57.50,58.00 36.00,55.50 20.00,52.60 10.00,50.80 0.00,49.30" fill="#dfdcda"/><polygon points="0.00,49.30 10.00,50.80 20.00,52.60 36.00,55.50 57.50,58.00 59.00,58.00 59.00,76.90 0.00,76.90" fill="#26272b"/><polygon points="28.75,73.40 57.50,72.90 57.50,76.90 25.88,76.90" fill="#707076" opacity="0.22"/><polygon points="11.50,70.40 28.75,69.40 31.63,72.40 11.50,73.40" fill="#5c5d62" opacity="0.18"/><polygon points="0.00,73.40 4.00,74.40 8.00,76.90 0.00,76.90" fill="#d8d8dc" opacity="0.7"/><polygon points="75.20,56.00 76.50,56.00 85.00,53.00 95.00,52.00 105.00,51.50 113.00,51.30 115.00,52.30 117.80,58.00 125.00,60.00 133.00,61.50 141.00,63.00 141.00,76.90 75.20,76.90" fill="#312e2e"/><polygon points="75.20,56.00 76.50,56.00 85.00,53.00 95.00,52.00 105.00,51.50 113.00,51.30 115.00,52.30 116.47,54.55 112.57,57.02 108.67,58.00 105.75,60.96 101.85,59.97 97.95,62.93 94.05,60.96 90.15,58.99 86.25,59.48 81.38,59.97 75.53,58.99" fill="#eeedef"/><g filter="url(#bt4)"><polygon points="101.85,59.39 104.78,58.87 115.50,64.57 125.25,69.76 129.15,73.39 125.25,73.39 112.57,66.65 101.85,61.46" fill="#b8b8bc" opacity="0.42"/><polygon points="92.10,61.46 96.97,61.98 98.92,66.13 94.05,65.61" fill="#b8b8bc" opacity="0.5"/><polygon points="77.47,58.35 88.20,59.39 91.12,64.57 79.42,65.61" fill="#9a9a9f" opacity="0.45"/><polygon points="99.90,62.50 108.67,60.42 114.53,65.61 119.40,70.80 107.70,69.76" fill="#a8a8ad" opacity="0.35"/><polygon points="77.47,63.54 90.15,62.50 94.05,70.80 78.45,71.84" fill="#5e4b3c" opacity="0.8"/><polygon points="78.45,72.35 133.05,71.84 137.93,76.61 76.50,76.61" fill="#8f857e" opacity="0.35"/></g><rect x="0" y="76.40" width="141" height="17.60" fill="url(#l4)"/><rect x="0" y="76.40" width="141" height="0.9" fill="#7d7774" opacity="0.35"/><rect x="30.0" y="77.20" width="0.9" height="2.6" fill="#3a3230" opacity="0.7"/><polygon points="58.00,35.00 68.01,35.00 68.00,79.80 57.50,79.80" fill="url(#tl4)"/><polygon points="68.01,35.00 76.20,35.00 76.60,79.80 68.00,79.80" fill="url(#tr4)"/><polygon points="67.00,17.30 68.01,35.70 57.50,35.70" fill="#7a6a5a"/><polygon points="67.00,17.30 76.70,35.70 68.01,35.70" fill="#3e3631"/><line x1="67.0" y1="11.0" x2="67.0" y2="17.3" stroke="#46423e" stroke-width="0.7"/><circle cx="67.0" cy="11.0" r="0.75" fill="#c9b993"/><rect x="60.6" y="38.2" width="3.6" height="5.8" fill="#4b3e33"/><rect x="71.4" y="38.8" width="2.4" height="5.2" fill="#4b3e33"/></g></svg><div class="tag" style="width:23.8px"><span>JPEG</span></div></div>
<div class="thumb" style="left:321px;top:170px;width:141.2px;height:93.6px"><svg viewBox="0 0 141 94" preserveAspectRatio="none"><defs><filter id="b5" x="-5%" y="-5%" width="110%" height="110%"><feGaussianBlur stdDeviation="0.55"/></filter><filter id="bb5" x="-20%" y="-20%" width="140%" height="140%"><feGaussianBlur stdDeviation="2.6"/></filter><filter id="bt5" x="-20%" y="-20%" width="140%" height="140%"><feGaussianBlur stdDeviation="0.6"/></filter><linearGradient id="s5" x1="0.1" y1="0" x2="0" y2="0.62"><stop offset="0" stop-color="#2b3c57"/><stop offset="0.35" stop-color="#4a6283"/><stop offset="0.72" stop-color="#7990aa"/><stop offset="1" stop-color="#95a6ba"/></linearGradient><radialGradient id="sh5" cx="0" cy="0.5" r="0.7"><stop offset="0" stop-color="#c0cad4" stop-opacity="0.22"/><stop offset="1" stop-color="#c0cad4" stop-opacity="0"/></radialGradient><linearGradient id="l5" x1="0" y1="0" x2="0" y2="1"><stop offset="0" stop-color="#b4ada5"/><stop offset="0.1" stop-color="#dad1c7"/><stop offset="1" stop-color="#d6cdc3"/></linearGradient><linearGradient id="tl5" x1="0" y1="0" x2="0" y2="1"><stop offset="0" stop-color="#b59f80"/><stop offset="1" stop-color="#9c8971"/></linearGradient><linearGradient id="tr5" x1="0" y1="0" x2="0" y2="1"><stop offset="0" stop-color="#827261"/><stop offset="1" stop-color="#706357"/></linearGradient><radialGradient id="dk5" cx="0.35" cy="0.55" r="0.55"><stop offset="0" stop-color="#556170" stop-opacity="0.5"/><stop offset="1" stop-color="#5a6470" stop-opacity="0"/></radialGradient></defs><rect width="141" height="94" fill="url(#s5)"/><rect width="141" height="94" fill="url(#sh5)"/><g filter="url(#bb5)" opacity="0.12"><line x1="0.0" y1="20.0" x2="30.0" y2="10.0" stroke="#c4ced8" stroke-width="4.0"/><line x1="92.0" y1="0.0" x2="97.0" y2="14.0" stroke="#c4ced8" stroke-width="2.5"/><line x1="100.0" y1="40.0" x2="140.0" y2="30.0" stroke="#c4ced8" stroke-width="2.0"/></g><g filter="url(#b5)"><polygon points="0.00,50.30 10.00,51.60 22.00,52.40 35.00,52.50 57.50,53.50 59.00,53.50 59.00,58.00 57.50,58.00 36.00,55.50 20.00,52.60 10.00,50.80 0.00,49.30" fill="#dfdcda"/><polygon points="0.00,49.30 10.00,50.80 20.00,52.60 36.00,55.50 57.50,58.00 59.00,58.00 59.00,76.90 0.00,76.90" fill="#26272b"/><polygon points="28.75,73.40 57.50,72.90 57.50,76.90 25.88,76.90" fill="#707076" opacity="0.22"/><polygon points="11.50,70.40 28.75,69.40 31.63,72.40 11.50,73.40" fill="#5c5d62" opacity="0.18"/><polygon points="0.00,73.40 4.00,74.40 8.00,76.90 0.00,76.90" fill="#d8d8dc" opacity="0.7"/><polygon points="75.20,56.00 76.50,56.00 85.00,53.00 95.00,52.00 105.00,51.50 113.00,51.30 115.00,52.30 117.80,58.00 125.00,60.00 133.00,61.50 141.00,63.00 141.00,76.90 75.20,76.90" fill="#312e2e"/><polygon points="75.20,56.00 76.50,56.00 85.00,53.00 95.00,52.00 105.00,51.50 113.00,51.30 115.00,52.30 116.47,54.55 112.57,57.02 108.67,58.00 105.75,60.96 101.85,59.97 97.95,62.93 94.05,60.96 90.15,58.99 86.25,59.48 81.38,59.97 75.53,58.99" fill="#eeedef"/><g filter="url(#bt5)"><polygon points="101.85,59.39 104.78,58.87 115.50,64.57 125.25,69.76 129.15,73.39 125.25,73.39 112.57,66.65 101.85,61.46" fill="#b8b8bc" opacity="0.42"/><polygon points="92.10,61.46 96.97,61.98 98.92,66.13 94.05,65.61" fill="#b8b8bc" opacity="0.5"/><polygon points="77.47,58.35 88.20,59.39 91.12,64.57 79.42,65.61" fill="#9a9a9f" opacity="0.45"/><polygon points="99.90,62.50 108.67,60.42 114.53,65.61 119.40,70.80 107.70,69.76" fill="#a8a8ad" opacity="0.35"/><polygon points="77.47,63.54 90.15,62.50 94.05,70.80 78.45,71.84" fill="#5e4b3c" opacity="0.8"/><polygon points="78.45,72.35 133.05,71.84 137.93,76.61 76.50,76.61" fill="#8f857e" opacity="0.35"/></g><rect x="0" y="76.40" width="141" height="17.60" fill="url(#l5)"/><rect x="0" y="76.40" width="141" height="0.9" fill="#7d7774" opacity="0.35"/><rect x="30.0" y="77.20" width="0.9" height="2.6" fill="#3a3230" opacity="0.7"/><polygon points="58.00,35.00 68.01,35.00 68.00,79.80 57.50,79.80" fill="url(#tl5)"/><polygon points="68.01,35.00 76.20,35.00 76.60,79.80 68.00,79.80" fill="url(#tr5)"/><polygon points="67.00,17.30 68.01,35.70 57.50,35.70" fill="#7a6a5a"/><polygon points="67.00,17.30 76.70,35.70 68.01,35.70" fill="#3e3631"/><line x1="67.0" y1="11.0" x2="67.0" y2="17.3" stroke="#46423e" stroke-width="0.7"/><circle cx="67.0" cy="11.0" r="0.75" fill="#c9b993"/><rect x="60.6" y="38.2" width="3.6" height="5.8" fill="#4b3e33"/><rect x="71.4" y="38.8" width="2.4" height="5.2" fill="#4b3e33"/></g></svg><div class="tag" style="width:22.8px"><span>RAW</span></div></div>
<!-- home bar -->
<div class="abs" style="left:280px;top:560.5px;width:191px;height:3.5px;border-radius:2px;background:#fff"></div>

<!-- Nikon widget -->
<div class="abs" style="left:682px;top:495.5px;width:50px;height:50.5px;border-radius:8px;background:#2b2b2b"></div>
<div class="t" style="left:696.5px;top:499.6px;font-size:7.3px;font-weight:bold;color:#ddd">Nikon</div>
<div class="abs" style="left:692px;top:510.4px;width:29.8px;height:29.8px;border-radius:50%;border:1.2px solid #f2f2f2"></div>
<div class="abs" style="left:694.3px;top:512.7px;width:25.2px;height:25.2px;border-radius:50%;background:#f2f2f2"></div>
</body></html>
